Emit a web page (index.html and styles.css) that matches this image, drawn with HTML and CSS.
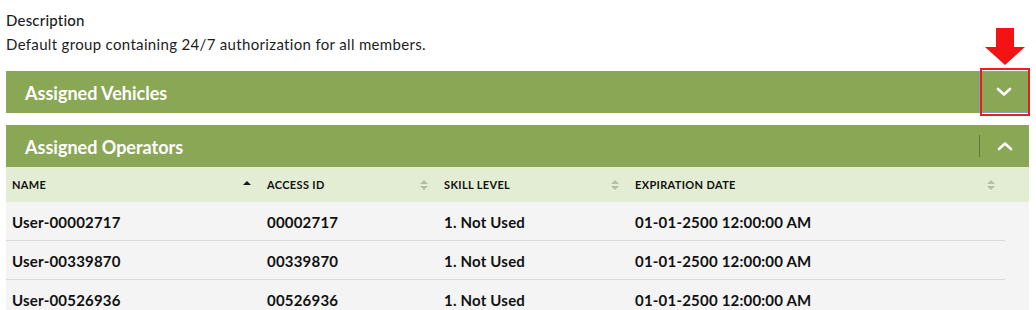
FILE: index.html
```html
<!DOCTYPE html>
<html>
<head>
<meta charset="utf-8">
<link rel="stylesheet" href="styles.css">
</head>
<body>
<div class="page">
  <div class="desc">
    <div class="desc-title">Description</div>
    <div class="desc-text">Default group containing 24/7 authorization for all members.</div>
  </div>

  <div class="panel panel-vehicles">
    <div class="panel-bar">
      <span class="panel-title">Assigned Vehicles</span>
      <button class="toggle toggle-focus" aria-label="Expand">
        <svg width="16" height="10" viewBox="0 0 16 10"><path d="M2 2 L8 7.5 L14 2" fill="none" stroke="#fff" stroke-width="2.6" stroke-linecap="round" stroke-linejoin="round"/></svg>
      </button>
    </div>
    <div class="callout-box"></div>
    <svg class="callout-arrow" width="42" height="38" viewBox="0 0 42 38"><path d="M12 0 H30 V19 H41 L21 37 L1 19 H12 Z" fill="#f21414"/></svg>
  </div>

  <div class="panel">
    <div class="panel-bar">
      <span class="panel-title">Assigned Operators</span>
      <span class="divider"></span>
      <button class="toggle" aria-label="Collapse">
        <svg width="16" height="10" viewBox="0 0 16 10"><path d="M2 8 L8 2.5 L14 8" fill="none" stroke="#fff" stroke-width="2.6" stroke-linecap="round" stroke-linejoin="round"/></svg>
      </button>
    </div>
    <div class="table">
      <div class="thead">
        <div class="th c1"><span>NAME</span><span class="sort asc"></span></div>
        <div class="th c2"><span>ACCESS ID</span><span class="sort both"></span></div>
        <div class="th c3"><span>SKILL LEVEL</span><span class="sort both"></span></div>
        <div class="th c4"><span>EXPIRATION DATE</span><span class="sort both"></span></div>
        <div class="th c5"></div>
      </div>
      <div class="tr">
        <div class="td c1">User-00002717</div>
        <div class="td c2">00002717</div>
        <div class="td c3">1. Not Used</div>
        <div class="td c4">01-01-2500 12:00:00 AM</div>
      </div>
      <div class="tr">
        <div class="td c1">User-00339870</div>
        <div class="td c2">00339870</div>
        <div class="td c3">1. Not Used</div>
        <div class="td c4">01-01-2500 12:00:00 AM</div>
      </div>
      <div class="tr">
        <div class="td c1">User-00526936</div>
        <div class="td c2">00526936</div>
        <div class="td c3">1. Not Used</div>
        <div class="td c4">01-01-2500 12:00:00 AM</div>
      </div>
    </div>
  </div>
</div>
</body>
</html>
```

FILE: styles.css
```css
* { box-sizing: border-box; }
html, body { margin: 0; padding: 0; background: #fff; height: 310px; overflow: hidden; }
body {
  font-family: "Lato", "Liberation Sans", sans-serif;
  color: #1d1d1d;
}
.page { padding: 11px 7px 0 6px; height: 310px; overflow: hidden; }

.desc { margin-bottom: 18px; }
.desc-title { font-size: 15px; line-height: 18px; font-weight: 500; letter-spacing: 0.2px; }
.desc-text { font-size: 15px; line-height: 18px; margin-top: 6px; letter-spacing: 0.33px; }

.panel { position: relative; margin-bottom: 12px; }
.panel-bar {
  background: #89a755;
  height: 42px;
  display: flex;
  align-items: center;
  padding-left: 19px;
}
.panel-title {
  color: #fff;
  font-weight: 700;
  font-size: 18px;
  flex: 1;
  padding-top: 2px;
}
.divider {
  width: 1px;
  height: 22px;
  background: #5f7a36;
}
.toggle {
  width: 49px;
  height: 42px;
  border: 0;
  background: transparent;
  padding: 0;
  display: flex;
  align-items: center;
  justify-content: center;
}
.toggle-focus {
  border: 1px solid #7fa3c4;
  box-shadow: inset 1px 0 0 #5d7a70;
  width: 50px;
}
.callout-box {
  position: absolute;
  right: -1px;
  top: -3px;
  width: 50px;
  height: 48px;
  border: 2px solid #ee1c1c;
}
.callout-arrow {
  position: absolute;
  right: 3px;
  top: -43px;
}

.table { background: #f4f4f4; }
.thead {
  display: flex;
  background: #e3edd3;
  height: 35px;
  align-items: center;
}
.th {
  display: flex;
  align-items: center;
  justify-content: space-between;
  font-size: 11px;
  font-weight: 700;
  color: #111;
  padding: 0 10px 0 6px;
  height: 100%;
  letter-spacing: 0.35px;
}
.c1 { width: 255px; }
.c2 { width: 177px; }
.c3 { width: 191px; }
.c4 { width: 376px; }
.c5 { width: 24px; padding: 0; }

.sort {
  position: relative;
  width: 8px;
  height: 10px;
}
.sort::before, .sort::after {
  content: "";
  position: absolute;
  left: 0;
  border-left: 4px solid transparent;
  border-right: 4px solid transparent;
}
.sort.both::before { top: 0; border-bottom: 4px solid #b5bda8; }
.sort.both::after { bottom: 0; border-top: 4px solid #b5bda8; }
.sort.asc::before { top: 1px; border-bottom: 4px solid #1a1a1a; }

.tr {
  display: flex;
  width: 999px;
  height: 39px;
  align-items: center;
  border-bottom: 1px solid #dadada;
}
.td {
  font-size: 15px;
  font-weight: 700;
  color: #111;
  padding-left: 6px;
  padding-top: 2px;
  letter-spacing: 0.2px;
}
```
